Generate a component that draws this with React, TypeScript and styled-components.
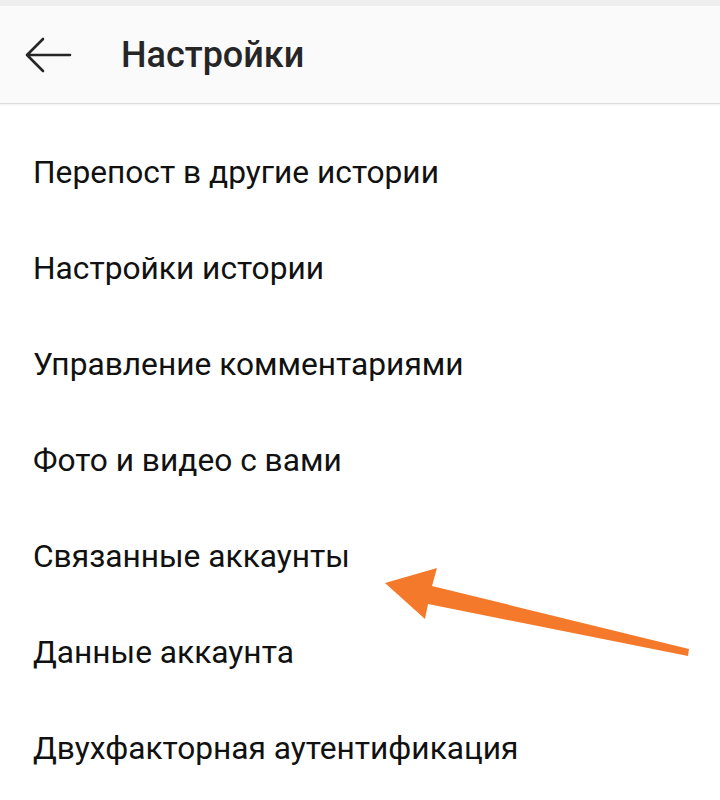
import React from "react";
import styled, { createGlobalStyle } from "styled-components";

const GlobalStyle = createGlobalStyle`
  html, body {
    margin: 0;
    padding: 0;
    background: #ffffff;
  }
  body {
    font-family: Roboto, "Noto Sans", sans-serif;
  }
`;

const Screen = styled.div`
  position: relative;
  width: 720px;
  height: 800px;
  overflow: hidden;
  background: #ffffff;
  border-top: 6px solid #eeeeee;
  box-sizing: border-box;
`;

const Toolbar = styled.header`
  display: flex;
  align-items: center;
  height: 97px;
  background: #fafafa;
  border-bottom: 1px solid #dcdcdc;
  box-shadow: 0 1px 2px rgba(0, 0, 0, 0.06);
  padding-left: 24px;
  gap: 49px;
`;

const BackButton = styled.button`
  display: flex;
  align-items: center;
  justify-content: center;
  width: 48px;
  height: 48px;
  padding: 0;
  border: none;
  background: none;
  cursor: pointer;
`;

const Title = styled.h1`
  margin: 0;
  font-family: Roboto, sans-serif;
  font-weight: 500;
  font-size: 36px;
  color: #262626;
`;

const List = styled.ul`
  list-style: none;
  margin: 0;
  padding: 20px 0 0;
`;

const Item = styled.li`
  display: flex;
  align-items: center;
  height: 96px;
  padding-left: 33px;
  font-family: Roboto, sans-serif;
  font-size: 31.7px;
  color: #111111;
`;

const Pointer = styled.svg`
  position: absolute;
  left: 380px;
  top: 555px;
`;

const items = [
  "Перепост в другие истории",
  "Настройки истории",
  "Управление комментариями",
  "Фото и видео с вами",
  "Связанные аккаунты",
  "Данные аккаунта",
  "Двухфакторная аутентификация",
];

const App: React.FC = () => {
  return (
    <>
      <GlobalStyle />
      <Screen>
        <Toolbar>
          <BackButton aria-label="Назад">
            <svg width="48" height="40" viewBox="0 0 48 40" fill="none">
              <path
                d="M46 20 H3 M19 4 L3 20 L19 36"
                stroke="#262626"
                strokeWidth="2.6"
                strokeLinecap="round"
                strokeLinejoin="round"
              />
            </svg>
          </BackButton>
          <Title>Настройки</Title>
        </Toolbar>
        <List>
          {items.map((text) => (
            <Item key={text}>{text}</Item>
          ))}
        </List>
        {/* orange pointer toward the linked accounts row */}
        <Pointer width="320" height="100" viewBox="0 0 320 100">
          <polygon
            points="5,22 57,7 52,25 309,88 308,95 48,43 45,58"
            fill="#f5792a"
          />
        </Pointer>
      </Screen>
    </>
  );
};

export default App;
